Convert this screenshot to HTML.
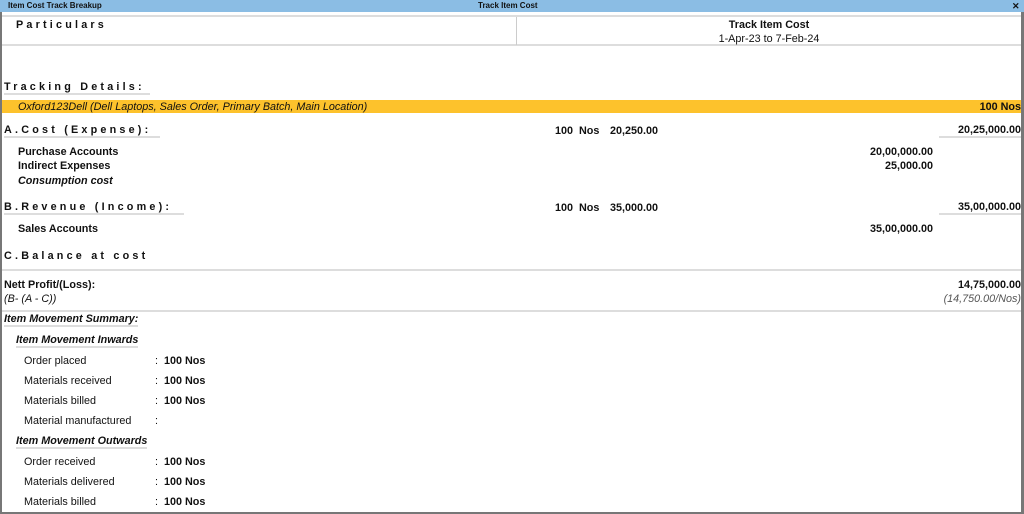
<!DOCTYPE html>
<html><head><meta charset="utf-8"><style>
*{margin:0;padding:0;box-sizing:border-box}
body{width:1024px;height:514px;overflow:hidden;background:#fff;font-family:"Liberation Sans",Arial,sans-serif;font-size:10.8px;color:#111;position:relative}
.a{position:absolute;white-space:nowrap;line-height:14px}
.b{font-weight:bold}
.i{font-style:italic}
.sp{letter-spacing:3.2px;font-weight:bold}
.r{text-align:right}
.ul{border-bottom:2px solid #ddd;line-height:12px}
.hl{position:absolute;left:2px;right:3px;height:2px;background:#ddd}
</style></head><body>
<div style="position:absolute;left:0;top:0;width:1024px;height:12px;background:#8bbde4"></div>
<div class="a b" style="left:8px;top:-1px;font-size:8px">Item Cost Track Breakup</div>
<div class="a b" style="left:478px;top:-1px;font-size:8px">Track Item Cost</div>
<div class="a b" style="left:1012px;top:-1px;font-size:9px">✕</div>
<div style="position:absolute;left:0;top:12px;width:2px;height:502px;background:#777"></div>
<div style="position:absolute;right:0;top:12px;width:3px;height:502px;background:#777"></div>
<div style="position:absolute;left:0;bottom:0;width:1024px;height:2px;background:#777"></div>
<div class="hl" style="top:15px"></div>
<div class="hl" style="top:44px"></div>
<div style="position:absolute;left:516px;top:17px;width:1px;height:28px;background:#ccc"></div>
<div class="a sp" style="left:16px;top:18px">Particulars</div>
<div class="a b" style="left:517px;width:504px;text-align:center;top:18px">Track Item Cost</div>
<div class="a" style="left:517px;width:504px;text-align:center;top:32px">1-Apr-23 to 7-Feb-24</div>
<div class="a sp ul" style="left:4px;top:81px;width:146px">Tracking Details:</div>
<div style="position:absolute;left:2px;right:3px;top:100px;height:13px;background:#fdc22c"></div>
<div class="a i" style="left:18px;top:100px">Oxford123Dell (Dell Laptops, Sales Order, Primary Batch, Main Location)</div>
<div class="a b r" style="right:3px;top:100px">100 Nos</div>
<div class="a sp ul" style="left:4px;top:124px;width:156px">A.Cost (Expense):</div>
<div class="a b" style="left:555px;top:124px">100 &nbsp;Nos</div>
<div class="a b" style="left:610px;top:124px">20,250.00</div>
<div class="a b r ul" style="right:3px;top:124px;width:82px">20,25,000.00</div>
<div class="a b" style="left:18px;top:145px">Purchase Accounts</div>
<div class="a b r" style="right:91px;top:145px">20,00,000.00</div>
<div class="a b" style="left:18px;top:159px">Indirect Expenses</div>
<div class="a b r" style="right:91px;top:159px">25,000.00</div>
<div class="a b i" style="left:18px;top:174px">Consumption cost</div>
<div class="a sp ul" style="left:4px;top:201px;width:180px">B.Revenue (Income):</div>
<div class="a b" style="left:555px;top:201px">100 &nbsp;Nos</div>
<div class="a b" style="left:610px;top:201px">35,000.00</div>
<div class="a b r ul" style="right:3px;top:201px;width:82px">35,00,000.00</div>
<div class="a b" style="left:18px;top:222px">Sales Accounts</div>
<div class="a b r" style="right:91px;top:222px">35,00,000.00</div>
<div class="a sp" style="left:4px;top:249px">C.Balance at cost</div>
<div class="hl" style="top:269px"></div>
<div class="a b" style="left:4px;top:278px">Nett Profit/(Loss):</div>
<div class="a i" style="left:4px;top:292px">(B- (A - C))</div>
<div class="a b r" style="right:3px;top:278px">14,75,000.00</div>
<div class="a i r" style="right:3px;top:292px;color:#555">(14,750.00/Nos)</div>
<div class="hl" style="top:310px"></div>
<div class="a b i ul" style="left:4px;top:313px">Item Movement Summary:</div>
<div class="a b i ul" style="left:16px;top:334px">Item Movement Inwards</div>
<div class="a" style="left:24px;top:354px">Order placed</div><div class="a" style="left:155px;top:354px">:</div><div class="a b" style="left:164px;top:354px">100 Nos</div>
<div class="a" style="left:24px;top:374px">Materials received</div><div class="a" style="left:155px;top:374px">:</div><div class="a b" style="left:164px;top:374px">100 Nos</div>
<div class="a" style="left:24px;top:394px">Materials billed</div><div class="a" style="left:155px;top:394px">:</div><div class="a b" style="left:164px;top:394px">100 Nos</div>
<div class="a" style="left:24px;top:414px">Material manufactured</div><div class="a" style="left:155px;top:414px">:</div>
<div class="a b i ul" style="left:16px;top:435px">Item Movement Outwards</div>
<div class="a" style="left:24px;top:455px">Order received</div><div class="a" style="left:155px;top:455px">:</div><div class="a b" style="left:164px;top:455px">100 Nos</div>
<div class="a" style="left:24px;top:475px">Materials delivered</div><div class="a" style="left:155px;top:475px">:</div><div class="a b" style="left:164px;top:475px">100 Nos</div>
<div class="a" style="left:24px;top:495px">Materials billed</div><div class="a" style="left:155px;top:495px">:</div><div class="a b" style="left:164px;top:495px">100 Nos</div>
</body></html>
